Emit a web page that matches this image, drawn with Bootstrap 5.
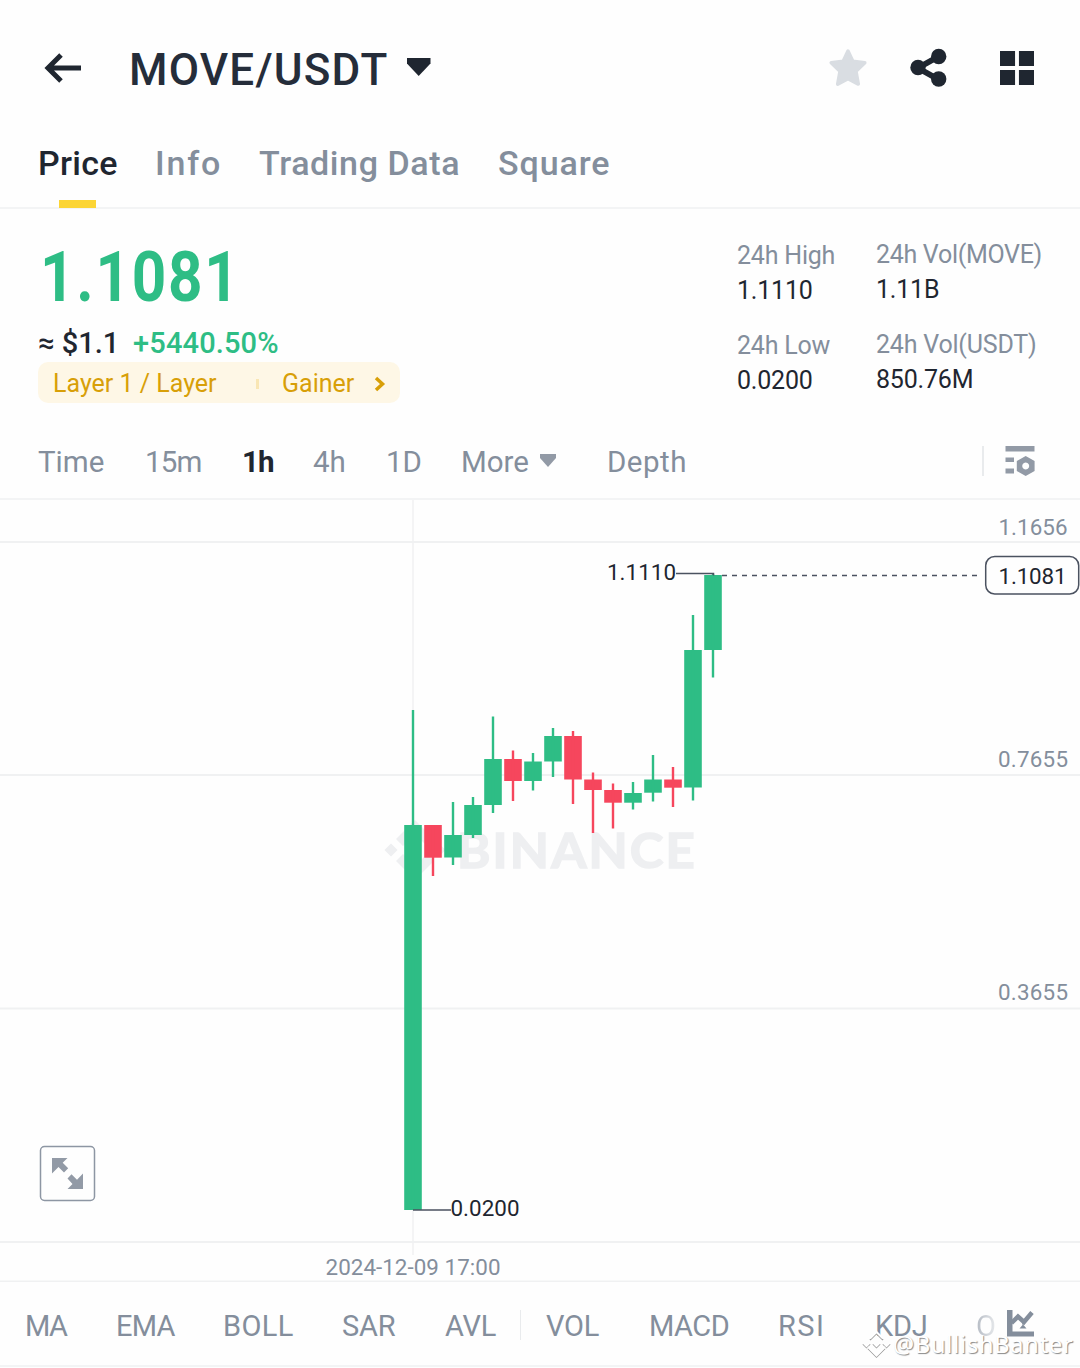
<!DOCTYPE html>
<html lang="en">
<head>
<meta charset="utf-8">
<meta name="viewport" content="width=device-width, initial-scale=1">
<title>MOVE/USDT</title>
<link href="https://cdn.jsdelivr.net/npm/bootstrap@5.3.0/dist/css/bootstrap.min.css" rel="stylesheet">
<style>
  :root { --ink:#1f2630; --muted:#848e9c; --up:#2ebd85; --rule:#f3f4f5; }
  body { font-family: Roboto, "Liberation Sans", sans-serif; color: var(--ink); background:#fefefe; width:1080px; height:1368px; overflow:hidden; }
  svg { display:block; flex:none; }
  .topbar { height:136px; padding:0 46px 0 44px; }
  .pair { font-size:44px; line-height:50px; font-weight:500; margin:3px 0 0 47px; width:278px; color:#252d3a; letter-spacing:1.2px; }
  .tabs { height:73px; border-bottom:2px solid var(--rule); padding-left:38px; font-size:34px; font-weight:500; line-height:54px; color:var(--muted); letter-spacing:.6px; }
  .tabs > div { height:71px; }
  .t-active { color:var(--ink); letter-spacing:.3px; }
  .t-active::after { content:""; display:block; width:37px; height:8px; margin:10px 0 0 21px; background:#fcd535; }
  .summary { height:218px; padding:29px 0 0 38px; }
  .bigprice { font-size:70px; line-height:80px; font-weight:700; color:var(--up); transform:scaleX(.86); transform-origin:0 0; width:260px; letter-spacing:2px; margin:-1px 0 0 2px; }
  .approx { font-size:29px; line-height:38px; font-weight:500; margin-top:7px; }
  .pill { width:362px; height:41px; border-radius:10px; background:#fef7e6; color:#d89f08; font-size:25px; padding:2px 0 0 15px; }
  .stat { font-size:25px; line-height:35px; letter-spacing:-.2px; }
  .stat span { display:block; color:var(--muted); }
  .stat + .stat { margin-top:20px; }
  .intervals { height:73px; border-bottom:2px solid var(--rule); padding-left:38px; font-size:29.5px; color:var(--muted); }
  .vline { width:2px; height:30px; background:#e9ebed; }
  .indicators { height:85px; padding:7px 0 0 25px; font-size:29px; color:var(--muted); border-bottom:2px solid var(--rule); letter-spacing:-.2px; }
  .fadeout { background:linear-gradient(90deg,#b4bac3,#eceef0 70%); -webkit-background-clip:text; color:transparent; }
  .stamp { left:862px; top:1327px; width:218px; height:34px; font:23.5px/34px "Noto Sans",sans-serif; color:#fff; text-shadow:1px 1px 1px #888; letter-spacing:.8px; }
</style>
</head>
<body class="position-relative">
<header class="topbar d-flex align-items-center">
  <svg width="38" height="36" viewBox="0 0 38 36" fill="none" stroke="#1f2630" stroke-width="5"><path d="M37 18H5M17 5 4 18l13 13"/></svg>
  <div class="pair">MOVE/USDT</div>
  <svg style="margin-top:-2px" width="24" height="20" viewBox="0 0 24 20"><path d="M0 1h23.500v5.500L11.700 19 0 6.500z" fill="#1f2630"/></svg>
  <svg class="ms-auto" width="40" height="42" viewBox="0 0 40 42"><path d="M20 4l4.800 10.300 12 1.500-8.800 8.500 2.300 12.800-10.300-5.300-10.300 5.300 2.300-12.800-8.800-8.500 12-1.500z" fill="#d9dde2" stroke="#d9dde2" stroke-width="3.500" stroke-linejoin="round"/></svg>
  <svg style="margin-left:41px" width="40" height="40" viewBox="0 0 40 40" fill="#1f2630"><path d="M29.500 8.500 9 20l20.500 11.500" fill="none" stroke="#1f2630" stroke-width="6"/><circle cx="9" cy="19.500" r="7.700"/><circle cx="29.700" cy="8.500" r="7.700"/><circle cx="29.700" cy="31" r="7.700"/></svg>
  <svg style="margin-left:51px" width="34" height="34" viewBox="0 0 35 35" fill="#1f2630"><path d="M0 0h15.500v15.500H0zM19.500 0H35v15.500H19.500zM0 19.500h15.500V35H0zM19.500 19.500H35V35H19.500z"/></svg>
</header>
<nav class="tabs d-flex">
  <div class="t-active" style="width:117px">Price</div>
  <div style="width:104px;letter-spacing:1.800px">Info</div>
  <div style="width:239px">Trading Data</div>
  <div style="letter-spacing:.9px">Square</div>
</nav>
<section class="summary d-flex">
  <div style="width:699px">
    <div class="bigprice">1.1081</div>
    <div class="approx d-flex"><div style="width:95px">≈ $1.1</div><div style="color:var(--up);letter-spacing:.15px">+5440.50%</div></div>
    <div class="pill d-flex align-items-center">
      <div style="width:203px">Layer 1 / Layer</div>
      <div style="width:3px;height:10px;background:#f9e6b4"></div>
      <div style="margin-left:23px;width:92px">Gainer</div>
      <svg width="12" height="16" viewBox="0 0 12 16" fill="none" stroke="#d89f08" stroke-width="3.500"><path d="M2 2l6.500 6L2 14"/></svg>
    </div>
  </div>
  <div style="width:139px">
    <div class="stat"><span>24h High</span>1.1110</div>
    <div class="stat"><span>24h Low</span>0.0200</div>
  </div>
  <div style="margin-top:-1px">
    <div class="stat"><span style="letter-spacing:-.3px">24h Vol(MOVE)</span>1.11B</div>
    <div class="stat"><span>24h Vol(USDT)</span>850.76M</div>
  </div>
</section>
<nav class="intervals d-flex align-items-center">
  <div style="width:107px">Time</div>
  <div style="width:97px;letter-spacing:-.8px">15m</div>
  <div style="width:71px;color:var(--ink);font-weight:700;letter-spacing:-1px">1h</div>
  <div style="width:73px">4h</div>
  <div style="width:75px">1D</div>
  <div style="width:78px">More</div>
  <svg style="margin-top:-4px" width="18" height="18" viewBox="0 0 18 18"><path d="M1 2h16v4L9 15 1 6z" fill="#929aa6"/></svg>
  <div style="margin-left:50px;width:375px;letter-spacing:.5px">Depth</div>
  <div class="vline" style="margin-top:-4px"></div>
  <svg style="margin-left:20px;margin-top:-4px" width="34" height="32" viewBox="0 0 34 32" fill="#929aa6"><path d="M1.500 1h29v5.500h-29zM1.500 12.500h8.500v4.500H1.500zM1.500 23.500h8.500v5H1.500z"/><path fill-rule="evenodd" d="M21.700 11l8.900 5v10l-8.900 5-8.900-5V16zM21.700 17.500a3.500 3.500 0 1 0 .01 0z"/></svg>
</nav>
<svg id="chart" width="1080" height="782" viewBox="0 500 1080 782" font-family="Roboto, sans-serif" font-size="22.400">
  <g stroke="#f0f1f2" stroke-width="2"><path d="M0 542h1080M0 775h1080M0 1008.500h1080M0 1242h1080M0 1281.500h1080"/><path d="M413 500v755" stroke-width="1.500"/></g>
  <g fill="#eeeff1">
    <path d="M391 843.500l6.500 6.500-6.500 6.500-6.500-6.500zM439 843.500l6.500 6.500-6.500 6.500-6.500-6.500zM415 843.500l6.500 6.500-6.500 6.500-6.500-6.500zM415 820l19 19-7 7-12-12-12 12-7-7zM415 880l19-19-7-7-12 12-12-12-7 7z"/>
    <text x="457" y="867.500" font-family="Lato, sans-serif" font-weight="700" font-size="47" letter-spacing="2" textLength="240" lengthAdjust="spacingAndGlyphs" stroke="#eeeff1" stroke-width="1.500">BINANCE</text>
  </g>
  <g id="candles"></g>
  <g stroke="#4b5260" fill="none" stroke-width="1.500"><path d="M676 573.500h37.500v2M413 1210h38"/><path d="M722 575.500h256" stroke-dasharray="5 5"/><rect x="985.700" y="556.500" width="93" height="37.500" rx="9" fill="#fefefe"/></g>
  <g fill="#1f2630"><text x="607" y="579.500" textLength="69">1.1110</text><text x="998.500" y="584.400" textLength="68">1.1081</text><text x="450.500" y="1216.400" textLength="69">0.0200</text></g>
  <g fill="#848e9c"><text x="998.500" y="534.500" textLength="69">1.1656</text><text x="998" y="767.400" textLength="70">0.7655</text><text x="998" y="1000.400" textLength="70">0.3655</text><text x="325.500" y="1275.400" textLength="175">2024-12-09 17:00</text></g>
  <rect x="40.500" y="1146.500" width="54" height="54" rx="4" fill="none" stroke="#8d96a3" stroke-width="1.500"/>
  <path fill="#929aa6" d="M52 1158h15.500l-4.800 4.800 5.500 5.500-4.200 4.200-5.500-5.500-6.500 6.500zM83 1189H67.500l5-5-5-5.500 4-4.200 5.500 5.500 6-6.300z"/>
</svg>
<nav class="indicators d-flex align-items-center text-nowrap">
  <div style="width:91px;letter-spacing:-1.500px">MA</div>
  <div style="width:107px;letter-spacing:-.8px">EMA</div>
  <div style="width:119px;letter-spacing:.4px">BOLL</div>
  <div style="width:103px">SAR</div>
  <div style="width:75px">AVL</div>
  <div class="vline" style="width:1px;margin-top:-4px"></div>
  <div style="margin-left:25px;width:103px">VOL</div>
  <div style="width:129px;letter-spacing:-.5px">MACD</div>
  <div style="width:97px;letter-spacing:1.500px">RSI</div>
  <div style="width:101px">KDJ</div>
  <div class="fadeout" style="width:31px">O</div>
  <svg style="margin-top:-6px" width="28" height="30" viewBox="0 0 28 30"><path d="M0 1h5.500v21.500H27v5H0z" fill="#848e9c"/><path d="M4.500 14l6.500-6.500 6 5.500L25 3.500" fill="none" stroke="#848e9c" stroke-width="4.500"/><path d="M15 13h2l-.5 3 3 3.500h-7l3-3.500z" fill="#848e9c"/></svg>
</nav>
<div class="stamp position-absolute d-flex text-nowrap">
  <svg width="31" height="34" viewBox="0 0 31 34" fill="none"><path d="M8 13l6.500-6.500L21 13M1 17l3.500 3.500L8 17M11 17l3.500 3.500L18 17M21 17l3.500 3.500L28 17M6 21.500l8.500 8.500 8.500-8.500" stroke="#999" stroke-width="1.500"/><path d="M8 11.500l6.500-6.500 6.500 6.500M1 15.500l3.500 3.500L8 15.500M11 15.500l3.500 3.500 3.500-3.500M21 15.500l3.500 3.500 3.500-3.500M6 20l8.500 8.500L23 20" stroke="#fff" stroke-width="2"/></svg>
  <span>@BullishBanter</span>
</div>
<script src="https://cdn.jsdelivr.net/npm/bootstrap@5.3.0/dist/js/bootstrap.bundle.min.js"></script>
<script>
  // Each row: body top, body bottom, wick top, wick bottom, rising
  const rows = [
    [825,1210,710,1210,1],[825,857.7,825,876,0],[835,857.5,802,865,1],[805,835,797,838,1],
    [759,805,716.5,813,1],[759,781,750.5,801,0],[761.5,781,753,790.5,1],[736,761.5,728,777,1],
    [736,779.5,731,804,0],[779.5,790,772.5,833,0],[790,802.7,783.5,828.5,0],[793,802.7,782,809.5,1],
    [779.5,792.7,755,801.5,1],[779.5,787.7,767,807,0],[650,787.5,615,800.5,1],[575,650,574,677.5,1]];
  document.getElementById('candles').innerHTML = rows.map(([a,b,h,l,up],i) => {
    const x = 413 + i*20;
    return `<g fill="${up ? '#2ebd85' : '#f6465d'}"><rect x="${x-8.8}" y="${a}" width="17.6" height="${b-a}"/><rect x="${x-1.2}" y="${h}" width="2.4" height="${l-h}"/></g>`;
  }).join('');
</script>
</body>
</html>
